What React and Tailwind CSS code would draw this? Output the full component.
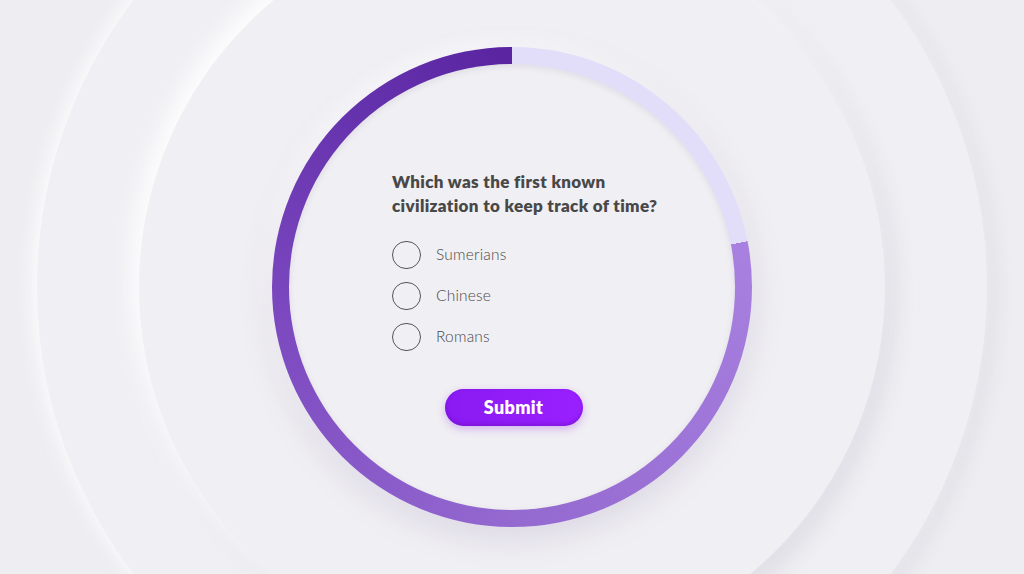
import React from 'react';

const options = ['Sumerians', 'Chinese', 'Romans'];

export default function App() {
  return (
    <div
      className="w-[1024px] h-[574px] bg-[#eeedf1] overflow-hidden flex items-center justify-center"
      style={{ fontFamily: 'Lato, "Open Sans", sans-serif' }}
    >
      {/* outer rings */}
      <div className="w-[950px] h-[950px] shrink-0 rounded-full bg-[#f0eff3] flex items-center justify-center shadow-[-6px_0_18px_rgba(255,255,255,0.9),6px_6px_22px_rgba(190,188,205,0.35)]">
        <div className="w-[746px] h-[746px] shrink-0 rounded-full bg-[#f0eff3] flex items-center justify-center shadow-[-8px_-8px_22px_rgba(255,255,255,0.95),8px_8px_24px_rgba(190,188,205,0.4)]">
          {/* progress ring */}
          <div className="w-[480px] h-[480px] shrink-0 rounded-full flex items-center justify-center bg-[conic-gradient(from_79deg,#a881e0_0deg,#9469d0_100deg,#7a46be_190deg,#6532ad_240deg,#5a24a0_281deg,#e2def9_281deg,#e2def9_360deg)] shadow-[0_10px_30px_rgba(150,140,180,0.25),-6px_-6px_18px_rgba(255,255,255,0.8)]">
            {/* inner disc */}
            <div className="w-[446px] h-[446px] rounded-full bg-[#f0eff3] flex flex-col pt-[106px] shadow-[inset_0_2px_6px_rgba(120,110,150,0.15)]">
              <div className="pl-[103px]">
                <p className="text-[17px] leading-[24px] font-extrabold text-[#484848] tracking-[0.35px]">
                  Which was the first known
                  <br />
                  civilization to keep track of time?
                </p>
                <div className="mt-[23px] flex flex-col gap-[13px]">
                  {options.map((o) => (
                    <label key={o} className="flex items-center gap-[15px] cursor-pointer">
                      <span className="w-[29px] h-[28px] rounded-full border-[1.5px] border-[#555]" />
                      <span className="text-[15.5px] font-light text-[#4a4a4a] tracking-[0.2px]">{o}</span>
                    </label>
                  ))}
                </div>
              </div>
              <div className="mt-[38px] flex justify-center">
                <button className="ml-[3px] w-[138px] h-[37px] rounded-full bg-[linear-gradient(90deg,#8a1af2,#9a20ff)] text-white text-[18px] font-extrabold tracking-[0.3px] shadow-[inset_0_-2px_4px_rgba(90,0,160,0.35),0_3px_8px_rgba(140,40,230,0.3)]">
                  Submit
                </button>
              </div>
            </div>
          </div>
        </div>
      </div>
    </div>
  );
}
